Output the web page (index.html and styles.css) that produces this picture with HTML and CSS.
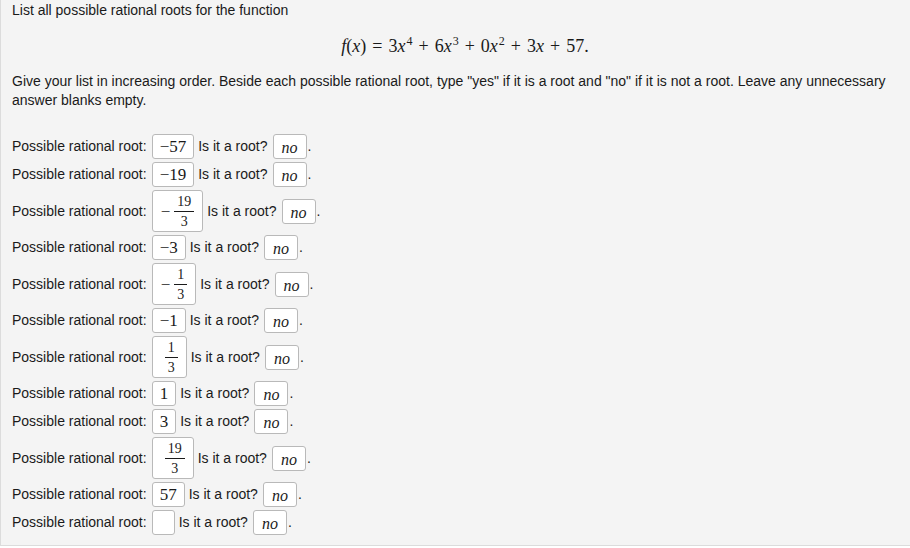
FILE: index.html
```html
<!DOCTYPE html>
<html lang="en">
<head>
  <meta charset="UTF-8" />
  <title>rational roots</title>
  <link rel="stylesheet" href="styles.css">
</head>
<body>
  <div class="panel">
    <p class="intro">List all possible rational roots for the function</p>

    <div class="formula">
      <i>f</i>(<i>x</i>)<span class="op">=</span>3<i>x</i><sup>4</sup><span class="op">+</span>6<i>x</i><sup>3</sup><span class="op">+</span>0<i>x</i><sup>2</sup><span class="op">+</span>3<i>x</i><span class="op">+</span>57.
    </div>

    <p class="instructions">Give your list in increasing order. Beside each possible rational root, type "yes" if it is a root and "no" if it is not a root. Leave any unnecessary answer blanks empty.</p>

    <div class="rows">
      <div class="row">
        <span class="label">Possible rational root:</span>
        <span class="box">&minus;57</span>
        <span class="label">Is it a root?</span>
        <span class="box answer">no</span><span class="dot">.</span>
      </div>
      <div class="row">
        <span class="label">Possible rational root:</span>
        <span class="box">&minus;19</span>
        <span class="label">Is it a root?</span>
        <span class="box answer">no</span><span class="dot">.</span>
      </div>
      <div class="row">
        <span class="label">Possible rational root:</span>
        <span class="box tall">&minus;<span class="frac"><span class="num">19</span><span class="den">3</span></span></span>
        <span class="label">Is it a root?</span>
        <span class="box answer">no</span><span class="dot">.</span>
      </div>
      <div class="row">
        <span class="label">Possible rational root:</span>
        <span class="box">&minus;3</span>
        <span class="label">Is it a root?</span>
        <span class="box answer">no</span><span class="dot">.</span>
      </div>
      <div class="row">
        <span class="label">Possible rational root:</span>
        <span class="box tall">&minus;<span class="frac"><span class="num">1</span><span class="den">3</span></span></span>
        <span class="label">Is it a root?</span>
        <span class="box answer">no</span><span class="dot">.</span>
      </div>
      <div class="row">
        <span class="label">Possible rational root:</span>
        <span class="box">&minus;1</span>
        <span class="label">Is it a root?</span>
        <span class="box answer">no</span><span class="dot">.</span>
      </div>
      <div class="row">
        <span class="label">Possible rational root:</span>
        <span class="box tall"><span class="frac"><span class="num">1</span><span class="den">3</span></span></span>
        <span class="label">Is it a root?</span>
        <span class="box answer">no</span><span class="dot">.</span>
      </div>
      <div class="row">
        <span class="label">Possible rational root:</span>
        <span class="box">1</span>
        <span class="label">Is it a root?</span>
        <span class="box answer">no</span><span class="dot">.</span>
      </div>
      <div class="row">
        <span class="label">Possible rational root:</span>
        <span class="box">3</span>
        <span class="label">Is it a root?</span>
        <span class="box answer">no</span><span class="dot">.</span>
      </div>
      <div class="row">
        <span class="label">Possible rational root:</span>
        <span class="box tall"><span class="frac"><span class="num">19</span><span class="den">3</span></span></span>
        <span class="label">Is it a root?</span>
        <span class="box answer">no</span><span class="dot">.</span>
      </div>
      <div class="row">
        <span class="label">Possible rational root:</span>
        <span class="box">57</span>
        <span class="label">Is it a root?</span>
        <span class="box answer">no</span><span class="dot">.</span>
      </div>
      <div class="row">
        <span class="label">Possible rational root:</span>
        <span class="box empty"></span>
        <span class="label">Is it a root?</span>
        <span class="box answer">no</span><span class="dot">.</span>
      </div>
    </div>
  </div>
</body>
</html>
```

FILE: styles.css
```css
body {
  margin: 0;
  background: #fff;
  color: #1a1a1a;
  font-family: 'Liberation Sans', Arial, sans-serif;
  font-size: 14px;
  line-height: 19px;
}

.panel {
  background: #f4f4f4;
  border-left: 1px solid #dcdcdc;
  border-bottom: 1px solid #dcdcdc;
  padding: 1px 12px 12px 11px;
  height: 532px;
}

.intro {
  margin: 0;
}

.formula {
  margin-top: 16px;
  text-align: center;
  padding-left: 20px;
  font-family: 'Liberation Serif', 'Times New Roman', serif;
  font-size: 18px;
  line-height: 20px;
}

.formula .op {
  padding: 0 6px;
}

.formula sup {
  font-size: 12px;
  line-height: 0;
  margin-left: 1px;
}

.instructions {
  margin: 16px 0 0;
}

.rows {
  margin-top: 24px;
  display: flex;
  flex-direction: column;
  gap: 3px;
}

.row {
  display: flex;
  align-items: center;
}

.label {
  margin-right: 4px;
}

.box {
  display: inline-flex;
  align-items: center;
  justify-content: center;
  box-sizing: border-box;
  min-width: 23px;
  height: 25px;
  padding: 0 7px;
  margin: 0 4px 0 1px;
  background: #fff;
  border: 1px solid #b9b9b9;
  border-radius: 3px;
  font-family: 'Liberation Serif', 'Times New Roman', serif;
  font-size: 17px;
}

.box.tall {
  height: 42px;
  padding: 0 8px;
}

.box.answer {
  font-style: italic;
  font-size: 16px;
  padding: 2px 8px 0;
  margin-right: 1px;
}

.frac {
  display: inline-flex;
  flex-direction: column;
  align-items: center;
  font-size: 14px;
  line-height: 15px;
  margin-left: 4px;
}

.frac .num {
  border-bottom: 1px solid #1a1a1a;
  padding: 0 3px 2px;
}

.frac .den {
  padding-top: 2px;
}
```
